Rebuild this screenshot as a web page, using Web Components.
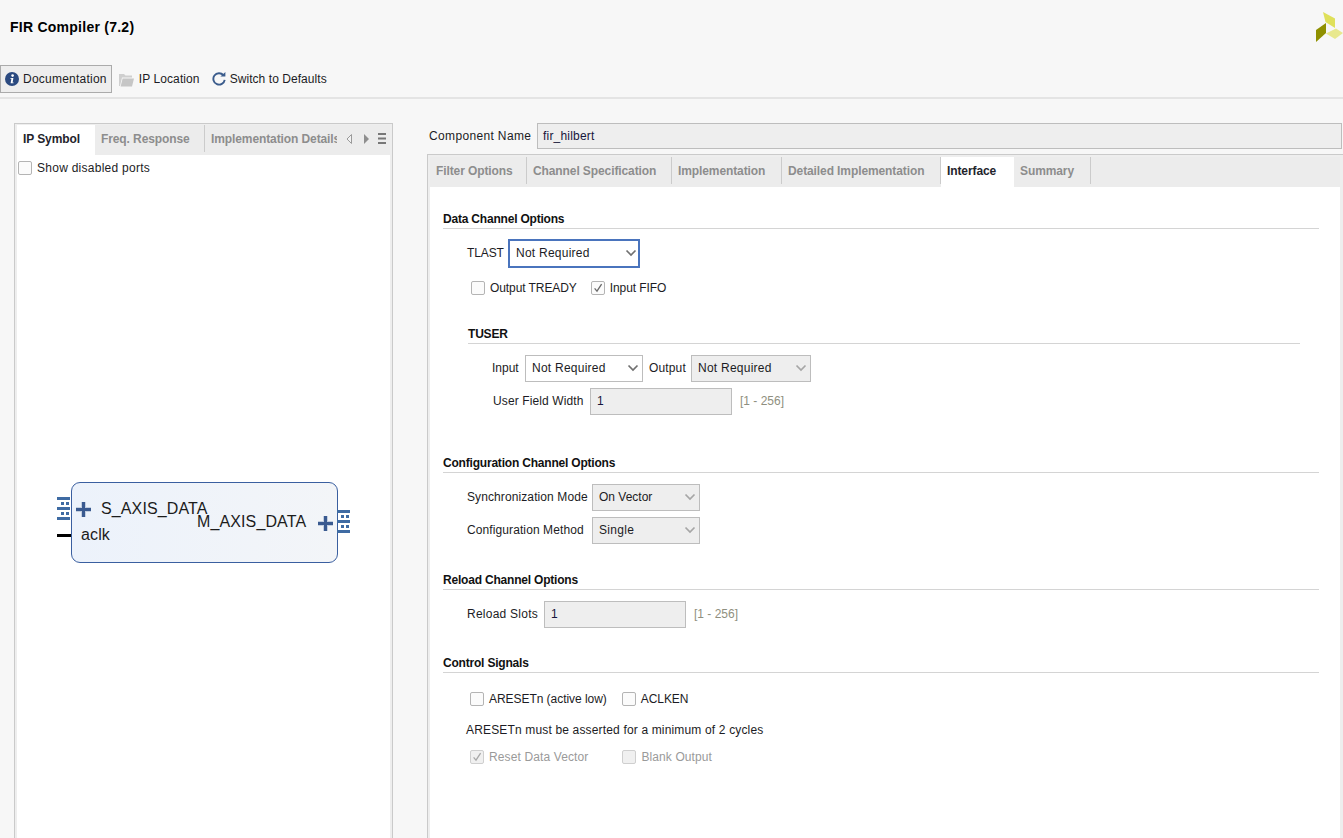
<!DOCTYPE html>
<html>
<head>
<meta charset="utf-8">
<title>FIR Compiler</title>
<style>
    html, body { margin: 0; height: 100%; overflow: hidden; background: #f7f7f7; }
    body { font: 12px/14px "Liberation Sans", Arial, sans-serif; color: #1c1c24; }
</style>
</head>
<body>
<fir-app></fir-app>

<script>
/**
 * FIR Compiler customization dialog
 * Every part of the dialog is its own small component
 */

class BaseElement extends HTMLElement {
    constructor() {
        super();
        this.attachShadow({ mode: 'open' });
    }

    connectedCallback() {
        this.render();
    }
}

class FirCheck extends BaseElement {
    render() {
        const checked = this.hasAttribute('checked');
        this.shadowRoot.innerHTML = `
            <style>
                :host { display: inline-flex; align-items: center; gap: 5px; height: 14px; white-space: nowrap; }
                .box {
                    box-sizing: border-box;
                    width: 14px;
                    height: 14px;
                    border: 1px solid #b4b4b4;
                    border-radius: 2px;
                    background: #fbfbfb;
                    display: block;
                }
                :host([disabled]) { color: #9a9a9a; }
                :host([disabled]) .box { background: #f0f0f0; border-color: #cfcfcf; }
                svg { display: block; }
            </style>
            <span class="box">${checked ? `
                <svg width="12" height="12" viewBox="0 0 12 12"><path d="M2.6 6.4 L5 9.2 L9.6 2.2" fill="none" stroke="${this.hasAttribute('disabled') ? '#a8a8a8' : '#6a6a6a'}" stroke-width="1.3"/></svg>` : ''}</span>
            <span><slot></slot></span>
        `;
    }
}

class FirCombo extends BaseElement {
    render() {
        this.shadowRoot.innerHTML = `
            <style>
                :host {
                    box-sizing: border-box;
                    display: flex;
                    align-items: center;
                    justify-content: space-between;
                    width: ${this.getAttribute('width')}px;
                    height: 27px;
                    padding: 0 3px 2px 6px;
                    border: 1px solid #bdbdbd;
                    background: #fff;
                    flex: none;
                }
                :host([disabled]) { background: #eee; }
                :host([focused]) { height: 29px; border: 2px solid #4a74bd; padding-left: 6px; padding-right: 1px; }
                svg { display: block; }
            </style>
            <span><slot></slot></span>
            <svg width="12" height="8" viewBox="0 0 12 8"><path d="M1.5 1.5 L6 6 L10.5 1.5" fill="none" stroke="${this.hasAttribute('disabled') ? '#a6a6a6' : '#707070'}" stroke-width="1.7"/></svg>
        `;
    }
}

class FirField extends BaseElement {
    render() {
        this.shadowRoot.innerHTML = `
            <style>
                :host {
                    box-sizing: border-box;
                    display: flex;
                    align-items: center;
                    flex: none;
                    width: ${this.getAttribute('width') ? this.getAttribute('width') + 'px' : 'auto'};
                    height: 27px;
                    padding: 0 6px 2px;
                    border: 1px solid #bdbdbd;
                    background: #eee;
                    color: #16163c;
                }
            </style>
            <slot></slot>
        `;
    }
}

class FirSection extends BaseElement {
    render() {
        this.shadowRoot.innerHTML = `
            <style>
                :host {
                    display: block;
                    font-weight: bold;
                    letter-spacing: -0.2px;
                    color: #111;
                    padding: 1px 0 2px;
                    border-bottom: 1px solid #d4d4d4;
                }
            </style>
            <slot></slot>
        `;
    }
}

class FirTabs extends BaseElement {
    render() {
        const tabs = this.getAttribute('tabs').split('|');
        const widths = this.getAttribute('widths').split(',');
        const active = Number(this.getAttribute('active') || 0);
        const clip = this.hasAttribute('clip');
        this.shadowRoot.innerHTML = `
            <style>
                :host {
                    display: flex;
                    height: 30px;
                    background: #ececec;
                    font-weight: bold;
                    letter-spacing: -0.1px;
                    color: #8d8d8d;
                    flex: none;
                }
                .tab {
                    box-sizing: border-box;
                    padding-left: 6px;
                    line-height: 28px;
                    white-space: nowrap;
                    overflow: hidden;
                    flex: none;
                    background: linear-gradient(#cbcbcb, #cbcbcb) right top / 1px 27px no-repeat;
                }
                .tab.on { background: #fff; color: #23232b; }
                .tab.clip { background: none; }
                .tools { margin-left: auto; display: flex; }
            </style>
            ${tabs.map((t, i) => `<div class="tab ${i === active ? 'on' : ''} ${clip && i === tabs.length - 1 ? 'clip' : ''}" style="width:${widths[i]}px">${t}</div>`).join('')}
            <div class="tools"><slot></slot></div>
        `;
    }
}

class FirToolButton extends BaseElement {
    render() {
        const icons = {
            info: `<svg width="14" height="14" viewBox="0 0 14 14"><circle cx="7" cy="7" r="7" fill="#2b4a80"/><circle cx="7.6" cy="3.6" r="1.3" fill="#fff"/><path d="M5.4 6 H8.4 L7.6 10.4 H8.6 V11.2 H5.6 L6.4 6.8 H5.4 Z" fill="#fff"/></svg>`,
            folder: `<svg width="15" height="15" viewBox="0 0 15 15"><path d="M0 2 H5 L6.5 3.5 H13 V5.5 H3 L1 14 H0 Z" fill="#cfcfcf"/><path d="M3.6 6.5 H15 L13 14.5 H1.6 Z" fill="#c6c6c6"/></svg>`,
            refresh: `<svg width="14" height="14" viewBox="0 0 14 14"><path d="M11.4 3.2 A5.7 5.7 0 1 0 12.7 7.8" fill="none" stroke="#3b5c8c" stroke-width="1.9"/><path d="M8.4 4.6 H13.4 V0 Z" fill="#3b5c8c"/></svg>`
        };
        this.shadowRoot.innerHTML = `
            <style>
                :host {
                    box-sizing: border-box;
                    display: inline-flex;
                    align-items: center;
                    height: 28px;
                    gap: var(--gap, 4px);
                    padding: 0 4px;
                    border: 1px solid transparent;
                    white-space: nowrap;
                }
                :host([pressed]) { border-color: #ababab; background: #eee; }
                svg { display: block; flex: none; }
            </style>
            ${icons[this.getAttribute('icon')]}
            <span><slot></slot></span>
        `;
    }
}

class FirLogo extends BaseElement {
    render() {
        this.shadowRoot.innerHTML = `
            <style>
                :host { display: block; width: 27px; height: 30px; }
                svg { display: block; }
            </style>
            <svg width="27" height="30" viewBox="0 0 27 30">
                <path d="M7 0 L19 6.5 V16 L9.5 10 Z" fill="#dfe05a"/>
                <path d="M10 11 V21 L0 30 V18 Z" fill="#8f9000"/>
                <path d="M10 21.5 L20 16.5 L27 21 L19 27 Z" fill="#e8e88e"/>
            </svg>
        `;
    }
}

class FirIpSymbol extends BaseElement {
    render() {
        const bus = `
            <rect x="0" y="0" width="13" height="3" fill="#3f6ba3"/>
            <rect x="0" y="10" width="13" height="3" fill="#3f6ba3"/>
            <rect x="0" y="20" width="13" height="3" fill="#3f6ba3"/>
            <path d="M4 5h3v3h-3zM9 5h3v3h-3zM4 15h3v3h-3zM9 15h3v3h-3z" fill="#3f6ba3"/>`;
        const plus = `
            <path d="M5 0h5v15h-5zM0 5h15v5h-15z" fill="#c3cfe0"/>
            <path d="M6 0h3v15h-3zM0 6h15v3h-15z" fill="#3a5a90"/>`;
        this.shadowRoot.innerHTML = `
            <style>
                :host { position: absolute; left: 0; top: 0; display: block; font-size: 16px; line-height: 18px; color: #1c1c1c; letter-spacing: 0.12px; }
                .block {
                    position: absolute;
                    left: 54px;
                    top: 327px;
                    box-sizing: border-box;
                    width: 267px;
                    height: 81px;
                    border: 1px solid #3a5fa0;
                    border-radius: 9px;
                    background: linear-gradient(90deg, #ecf2fb, #f3f5f8);
                }
                .lbl { position: absolute; white-space: nowrap; }
                svg { position: absolute; left: 0; top: 0; overflow: visible; }
            </style>
            <div class="block"></div>
            <svg width="373" height="500">
                <g transform="translate(40 342)">${bus}</g>
                <g transform="translate(320 355)">${bus}</g>
                <rect x="40" y="379" width="14" height="3" fill="#000"/>
                <g transform="translate(59 347)">${plus}</g>
                <g transform="translate(301 361)">${plus}</g>
            </svg>
            <span class="lbl" style="left:84px;top:345px">S_AXIS_DATA</span>
            <span class="lbl" style="left:180px;top:358px">M_AXIS_DATA</span>
            <span class="lbl" style="left:64px;top:371px">aclk</span>
        `;
    }
}

class FirSymbolPanel extends BaseElement {
    render() {
        this.shadowRoot.innerHTML = `
            <style>
                :host {
                    display: flex;
                    flex-direction: column;
                    box-sizing: border-box;
                    border: 1px solid #cacaca;
                    border-bottom: 0;
                    padding: 1px 2px 0;
                    background: #eee;
                    min-height: 0;
                }
                .body { flex: 1; background: #fff; position: relative; padding: 6px 0 0 1px; }
                .tools { display: flex; align-items: center; width: 53px; height: 28px; }
                svg { display: block; }
            </style>
            <fir-tabs tabs="IP Symbol|Freq. Response|Implementation Details" widths="78,110,132" active="0" clip>
                <div class="tools">
                    <svg width="53" height="28" viewBox="0 0 53 28">
                        <path d="M14.5 9.5 V18.5 L10 14 Z" fill="#f2f2f2" stroke="#9a9a9a"/>
                        <path d="M27 9 L32 14 L27 19 Z" fill="#8e8e8e"/>
                        <path d="M41 8h8v2h-8zM41 12.500h8v2h-8zM41 17h8v2h-8z" fill="#777"/>
                    </svg>
                </div>
            </fir-tabs>
            <div class="body">
                <fir-check style="letter-spacing:.26px">Show disabled ports</fir-check>
                <fir-ip-symbol></fir-ip-symbol>
            </div>
        `;
    }
}

class FirInterfacePage extends BaseElement {
    render() {
        this.shadowRoot.innerHTML = `
            <style>
                :host { display: block; padding: 24px 21px 0 13px; background: #fff; }
                .row { display: flex; align-items: center; }
                .row > span { padding-bottom: 2px; flex: none; white-space: nowrap; }
                .range { color: #8f8f80; margin-left: 2px; }
                fir-combo { letter-spacing: .25px; }
            </style>
            <fir-section>Data Channel Options</fir-section>
            <div class="row" style="margin:10px 0 0 24px;gap:5px">
                <span style="width:36px;letter-spacing:-.1px">TLAST</span>
                <fir-combo width="132" focused>Not Required</fir-combo>
            </div>
            <div class="row" style="margin:13px 0 0 28px;gap:14px">
                <fir-check style="letter-spacing:-.08px">Output TREADY</fir-check>
                <fir-check checked style="letter-spacing:-.1px">Input FIFO</fir-check>
            </div>

            <div style="margin:31px 19px 0 25px"><fir-section>TUSER</fir-section></div>
            <div class="row" style="margin:11px 0 0 49px;gap:5px">
                <span style="width:28px">Input</span>
                <fir-combo width="118">Not Required</fir-combo>
                <span style="width:37px;margin-left:1px;letter-spacing:.15px">Output</span>
                <fir-combo width="120" disabled>Not Required</fir-combo>
            </div>
            <div class="row" style="margin:6px 0 0 50px;gap:6px">
                <span style="width:91px;letter-spacing:.12px">User Field Width</span>
                <fir-field width="142">1</fir-field>
                <span class="range">[1 - 256]</span>
            </div>

            <div style="margin-top:40px"><fir-section>Configuration Channel Options</fir-section></div>
            <div class="row" style="margin:11px 0 0 24px">
                <span style="width:125px;letter-spacing:.1px">Synchronization Mode</span>
                <fir-combo width="108" disabled style="letter-spacing:0">On Vector</fir-combo>
            </div>
            <div class="row" style="margin:6px 0 0 24px">
                <span style="width:125px;letter-spacing:.1px">Configuration Method</span>
                <fir-combo width="108" disabled style="letter-spacing:.3px">Single</fir-combo>
            </div>

            <div style="margin-top:28px"><fir-section>Reload Channel Options</fir-section></div>
            <div class="row" style="margin:11px 0 0 24px;gap:6px">
                <span style="width:71px;letter-spacing:.25px">Reload Slots</span>
                <fir-field width="142">1</fir-field>
                <span class="range">[1 - 256]</span>
            </div>

            <div style="margin-top:27px"><fir-section>Control Signals</fir-section></div>
            <div class="row" style="margin:19px 0 0 27px;gap:15px">
                <fir-check style="letter-spacing:-.05px">ARESETn (active low)</fir-check>
                <fir-check style="letter-spacing:-.05px">ACLKEN</fir-check>
            </div>
            <div style="margin:17px 0 0 23px;letter-spacing:.16px">ARESETn must be asserted for a minimum of 2 cycles</div>
            <div class="row" style="margin:13px 0 0 27px;gap:34px">
                <fir-check checked disabled style="letter-spacing:.12px">Reset Data Vector</fir-check>
                <fir-check disabled style="letter-spacing:.1px">Blank Output</fir-check>
            </div>
        `;
    }
}

class FirApp extends BaseElement {
    render() {
        this.shadowRoot.innerHTML = `
            <style>
                :host { display: flex; flex-direction: column; height: 838px; overflow: hidden; }
                header { display: flex; justify-content: space-between; height: 65px; flex: none; }
                h1 { margin: 20px 0 0 10px; font-size: 14px; line-height: 14px; letter-spacing: .25px; color: #000; }
                fir-logo { margin-top: 12px; }
                .toolbar { display: flex; flex: none; height: 28px; padding-bottom: 4px; border-bottom: 2px solid #e4e4e4; }
                .main {
                    flex: 1;
                    min-height: 0;
                    display: grid;
                    grid-template-columns: 379px 1fr;
                    column-gap: 34px;
                    padding: 24px 0 0 14px;
                }
                .config { display: flex; flex-direction: column; min-height: 0; }
                .name-row { display: flex; align-items: center; gap: 6px; padding: 0 1px 0 2px; flex: none; height: 26px; margin-bottom: 5px; }
                .name-row span { width: 102px; letter-spacing: .35px; white-space: nowrap; flex: none; }
                .name-row fir-field { flex: 1; height: 26px; padding: 0 5px; letter-spacing: .2px; }
                .panel {
                    flex: 1;
                    display: flex;
                    flex-direction: column;
                    border: 1px solid #cacaca;
                    border-width: 1px 0 0 1px;
                    padding: 2px 3px 0 2px;
                    background: #eee;
                    min-height: 0;
                }
                fir-interface-page { flex: 1; }
            </style>
            <header>
                <h1>FIR Compiler (7.2)</h1>
                <fir-logo></fir-logo>
            </header>
            <div class="toolbar">
                <fir-tool-button icon="info" pressed style="letter-spacing:.23px">Documentation</fir-tool-button>
                <fir-tool-button icon="folder" style="--gap:5px;margin-left:2px;letter-spacing:.1px">IP Location</fir-tool-button>
                <fir-tool-button icon="refresh" style="margin-left:2px;letter-spacing:.06px">Switch to Defaults</fir-tool-button>
            </div>
            <div class="main">
                <fir-symbol-panel></fir-symbol-panel>
                <div class="config">
                    <div class="name-row">
                        <span>Component Name</span>
                        <fir-field>fir_hilbert</fir-field>
                    </div>
                    <div class="panel">
                        <fir-tabs tabs="Filter Options|Channel Specification|Implementation|Detailed Implementation|Interface|Summary" widths="97,145,110,159,73,77" active="4"></fir-tabs>
                        <fir-interface-page></fir-interface-page>
                    </div>
                </div>
            </div>
        `;
    }
}

customElements.define('fir-check', FirCheck);
customElements.define('fir-combo', FirCombo);
customElements.define('fir-field', FirField);
customElements.define('fir-section', FirSection);
customElements.define('fir-tabs', FirTabs);
customElements.define('fir-tool-button', FirToolButton);
customElements.define('fir-logo', FirLogo);
customElements.define('fir-ip-symbol', FirIpSymbol);
customElements.define('fir-symbol-panel', FirSymbolPanel);
customElements.define('fir-interface-page', FirInterfacePage);
customElements.define('fir-app', FirApp);
</script>
</body>
</html>
